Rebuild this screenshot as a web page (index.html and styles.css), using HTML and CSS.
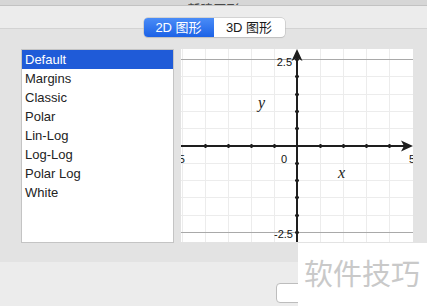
FILE: index.html
```html
<!DOCTYPE html>
<html>
<head>
<meta charset="utf-8">
<link rel="stylesheet" href="styles.css">
</head>
<body>
<div class="window">
  <div class="titlebar"><span class="title">新建图形</span></div>
  <div class="header">
    <div class="seg">
      <div class="seg-item active">2D 图形</div>
      <div class="seg-item">3D 图形</div>
    </div>
  </div>
  <div class="panel">
    <ul class="list">
      <li class="selected">Default</li>
      <li>Margins</li>
      <li>Classic</li>
      <li>Polar</li>
      <li>Lin-Log</li>
      <li>Log-Log</li>
      <li>Polar Log</li>
      <li>White</li>
    </ul>
    <div class="graph">
      <svg width="232" height="194" viewBox="0 0 232 194">
        <g stroke="#ececec" stroke-width="1">
          <line x1="1.5" y1="0" x2="1.5" y2="194"/>
          <line x1="24.5" y1="0" x2="24.5" y2="194"/>
          <line x1="47.5" y1="0" x2="47.5" y2="194"/>
          <line x1="70.5" y1="0" x2="70.5" y2="194"/>
          <line x1="93.5" y1="0" x2="93.5" y2="194"/>
          <line x1="139.5" y1="0" x2="139.5" y2="194"/>
          <line x1="162.5" y1="0" x2="162.5" y2="194"/>
          <line x1="185.5" y1="0" x2="185.5" y2="194"/>
          <line x1="208.5" y1="0" x2="208.5" y2="194"/>
          <line x1="0" y1="27.5" x2="232" y2="27.5"/>
          <line x1="0" y1="45.5" x2="232" y2="45.5"/>
          <line x1="0" y1="62.5" x2="232" y2="62.5"/>
          <line x1="0" y1="79.5" x2="232" y2="79.5"/>
          <line x1="0" y1="114.5" x2="232" y2="114.5"/>
          <line x1="0" y1="131.5" x2="232" y2="131.5"/>
          <line x1="0" y1="148.5" x2="232" y2="148.5"/>
          <line x1="0" y1="166.5" x2="232" y2="166.5"/>
        </g>
        <g stroke="#a9a9a9" stroke-width="1">
          <line x1="0" y1="10.5" x2="232" y2="10.5"/>
          <line x1="0" y1="183.5" x2="232" y2="183.5"/>
        </g>
        <g stroke="#1e1e1e" stroke-width="2">
          <line x1="116" y1="6" x2="116" y2="194"/>
          <line x1="0" y1="97" x2="225" y2="97"/>
        </g>
        <g stroke="#1e1e1e" stroke-width="2">
          <line x1="24.5" y1="95" x2="24.5" y2="99"/>
          <line x1="47.5" y1="95" x2="47.5" y2="99"/>
          <line x1="70.5" y1="95" x2="70.5" y2="99"/>
          <line x1="93.5" y1="95" x2="93.5" y2="99"/>
          <line x1="139.5" y1="95" x2="139.5" y2="99"/>
          <line x1="162.5" y1="95" x2="162.5" y2="99"/>
          <line x1="185.5" y1="95" x2="185.5" y2="99"/>
          <line x1="208.5" y1="95" x2="208.5" y2="99"/>
          <line x1="114" y1="10.5" x2="118" y2="10.5"/>
          <line x1="114" y1="27.5" x2="118" y2="27.5"/>
          <line x1="114" y1="45.5" x2="118" y2="45.5"/>
          <line x1="114" y1="62.5" x2="118" y2="62.5"/>
          <line x1="114" y1="79.5" x2="118" y2="79.5"/>
          <line x1="114" y1="114.5" x2="118" y2="114.5"/>
          <line x1="114" y1="131.5" x2="118" y2="131.5"/>
          <line x1="114" y1="148.5" x2="118" y2="148.5"/>
          <line x1="114" y1="166.5" x2="118" y2="166.5"/>
          <line x1="114" y1="183.5" x2="118" y2="183.5"/>
        </g>
        <path d="M116 0 L121.5 12 L116 9 L110.5 12 Z" fill="#1e1e1e"/>
        <path d="M232 97 L220 91.5 L223 97 L220 102.5 Z" fill="#1e1e1e"/>
        <g class="num" fill="#111">
          <text x="111" y="17" text-anchor="end">2.5</text>
          <text x="112" y="189" text-anchor="end">-2.5</text>
          <text x="106" y="114" text-anchor="end">0</text>
          <text x="228" y="114">5</text>
          <text x="-6" y="114">-5</text>
        </g>
        <text class="var" x="77" y="59">y</text>
        <text class="var" x="157" y="129">x</text>
      </svg>
    </div>
  </div>
  <div class="footer">
    <div class="button">完成</div>
  </div>
  <div class="watermark">软件技巧</div>
</div>
</body>
</html>
```
FILE: styles.css
```css
html, body {
  margin: 0;
  padding: 0;
}
body {
  width: 427px;
  height: 306px;
  overflow: hidden;
  font-family: "Liberation Sans", "Noto Sans CJK SC", sans-serif;
  background: #ececec;
}
.window {
  position: relative;
  width: 427px;
  height: 306px;
  overflow: hidden;
}
.titlebar {
  height: 5px;
  background: #d6d6d6;
  border-bottom: 1px solid #c2c2c2;
  overflow: hidden;
  text-align: center;
}
.title {
  display: inline-block;
  margin-top: -11px;
  font-family: "Noto Sans CJK SC", sans-serif;
  font-size: 13px;
  line-height: 15px;
  color: #4a4a4a;
}
.header {
  height: 22px;
  background: #ececec;
  display: flex;
  justify-content: center;
  align-items: flex-start;
}
.seg {
  position: relative;
  z-index: 2;
  margin-top: 12px;
  margin-left: 1px;
  display: flex;
  height: 19px;
  border-radius: 4px;
  background: #fff;
  box-shadow: 0 0 0 0.5px #b9b9b9, 0 1px 1px rgba(0,0,0,0.12);
  overflow: hidden;
}
.seg-item {
  width: 71px;
  font-family: "Liberation Sans", "Noto Sans CJK SC", sans-serif;
  font-size: 13px;
  line-height: 19px;
  text-align: center;
  color: #1a1a1a;
}
.seg-item.active {
  width: 70px;
  color: #fff;
  background: linear-gradient(#4a8cf7, #1c62e6);
}
.panel {
  height: 213px;
  border-top: 1px solid #d3d3d3;
  background: #e3e3e3;
  padding: 20px 0 0 21px;
  display: flex;
  gap: 7px;
  align-items: flex-start;
}
.list {
  margin: 0;
  padding: 0;
  list-style: none;
  width: 151px;
  height: 192px;
  background: #fff;
  border: 1px solid #c4c4c4;
}
.list li {
  height: 19px;
  line-height: 19px;
  padding-left: 3px;
  font-size: 13px;
  color: #232323;
}
.list li.selected {
  background: #1f5bd8;
  color: #fff;
}
.graph {
  width: 232px;
  height: 193px;
  background: #fff;
  overflow: hidden;
}
.graph svg {
  display: block;
}
.num {
  font-family: "Liberation Sans", sans-serif;
  font-size: 11px;
}
.var {
  font-family: "Liberation Serif", serif;
  font-style: italic;
  font-size: 16px;
  fill: #222;
}
.footer {
  height: 23px;
  padding: 21px 0 0 276px;
  background: #ececec;
}
.button {
  width: 70px;
  height: 18px;
  background: #fff;
  border: 1px solid #bdbdbd;
  border-radius: 4px;
  font-family: "Noto Sans CJK SC", sans-serif;
  font-size: 12px;
  line-height: 18px;
  padding-left: 21px;
  box-sizing: content-box;
  color: #222;
}
.watermark {
  position: absolute;
  left: 298px;
  top: 243px;
  width: 129px;
  height: 63px;
  background: #fff;
  box-sizing: border-box;
  padding: 9px 0 0 6px;
  font-family: "Noto Sans CJK SC", sans-serif;
  font-size: 29px;
  line-height: 40px;
  color: #c9c9c9;
  white-space: nowrap;
}
```
